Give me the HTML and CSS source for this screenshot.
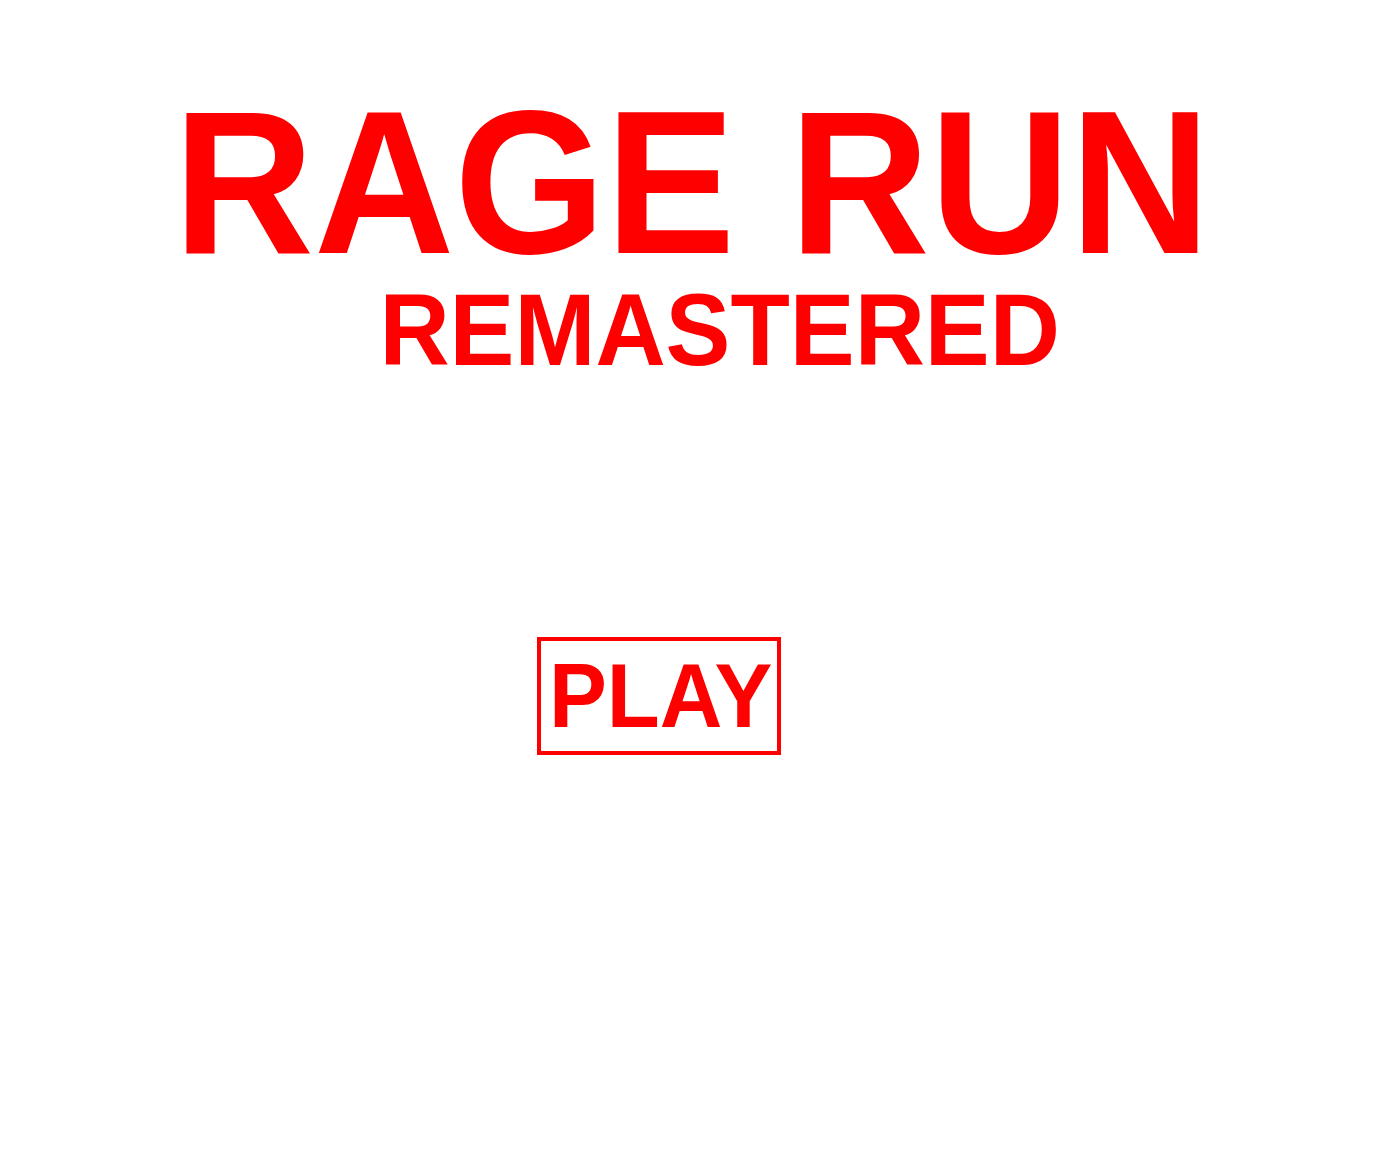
FILE: index.html
```html
<!DOCTYPE html>
<html lang="en">
<head>
  <meta charset="UTF-8" />
  <meta name="viewport" content="width=device-width, initial-scale=1.0"/>
  <title>Rage Run Remastered</title>
  <link rel="stylesheet" href="styles.css">
</head>
<body>

  <!-- Start Menu -->
  <div class="menu">
    <h1 class="title">RAGE RUN</h1>
    <h2 class="subtitle">REMASTERED</h2>
    <button class="play-btn" id="play"><span class="play-label">PLAY</span></button>
  </div>

</body>
</html>
```

FILE: styles.css
```css
/* Base Styles */
body {
  font-family: "Liberation Sans", Arial, sans-serif;
  margin: 0;
  background-color: #fff;
  color: #ff0000;
}

/* Menu */
.menu {
  display: flex;
  flex-direction: column;
  align-items: flex-start;
}
.title {
  align-self: stretch;
  margin: 82px 0 0;
  font-size: 204px;
  line-height: 200px;
  font-weight: bold;
  text-align: center;
  transform: scaleX(0.953);
}
.subtitle {
  align-self: stretch;
  margin: 0;
  padding-left: 58px;
  font-size: 102px;
  line-height: 96px;
  font-weight: bold;
  text-align: center;
  transform: scaleX(0.953);
}
.play-btn {
  width: 244px;
  margin: 259px 0 0 537px;
  padding: 4px 0 4px 8px;
  font-family: inherit;
  font-size: 91px;
  line-height: 102px;
  font-weight: bold;
  text-align: left;
  color: #ff0000;
  background: #fff;
  border: 4px solid #ff0000;
  cursor: pointer;
}
.play-label {
  display: inline-block;
  transform: scaleX(0.953);
  transform-origin: left center;
}
```
